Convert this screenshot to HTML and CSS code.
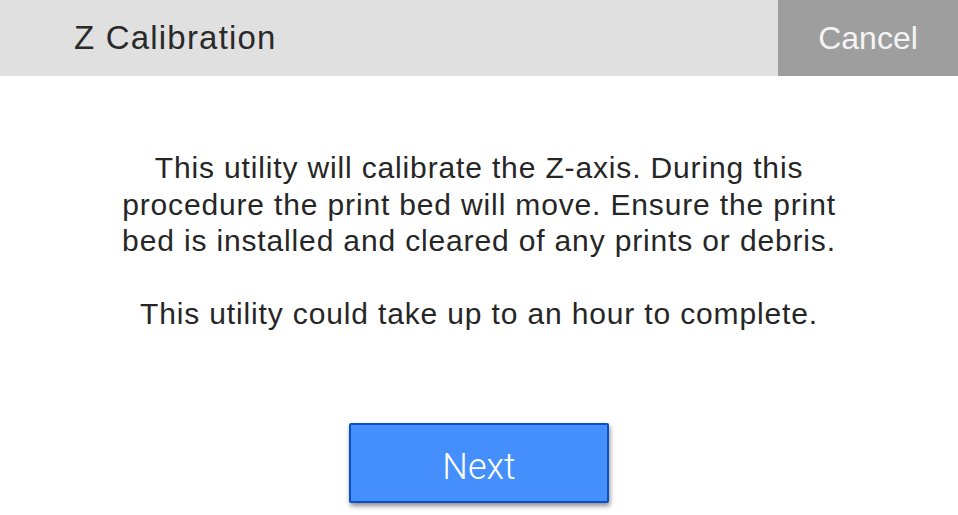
FILE: index.html
```html
<!DOCTYPE html>
<html lang="en">
<head>
    <meta charset="UTF-8">
    <meta name="viewport" content="width=device-width, initial-scale=1.0">
    <title>Z Calibration</title>
    <link rel="stylesheet" href="styles.css">
</head>
<body>
    <div class="screen">
        <div class="header">
            <div class="header__title">Z Calibration</div>
            <button class="header__cancel">Cancel</button>
        </div>
        <div class="content">
            <p class="content__text">This utility will calibrate the Z-axis. During this procedure the print bed will move. Ensure the print bed is installed and cleared of any prints or debris.</p>
            <p class="content__text">This utility could take up to an hour to complete.</p>
            <button class="content__next">Next</button>
        </div>
    </div>
</body>
</html>
```

FILE: styles.css
```css
:root {
    --header-height: 76px;
    --header-bg: #e0e0e0;
    --cancel-bg: #9e9e9e;
    --text: #262626;
    --blue: #448ffc;
    --blue-dark: #0b50c2;
}

* {
    margin: 0;
    padding: 0;
    box-sizing: border-box;
}

body {
    background: #ffffff;
    font-family: "Liberation Sans", Arial, Helvetica, sans-serif;
    color: var(--text);
}

.screen {
    width: 958px;
    height: 515px;
    display: flex;
    flex-direction: column;
}

.header {
    height: var(--header-height);
    display: flex;
    align-items: stretch;
    background: var(--header-bg);
}

.header__title {
    flex: 1;
    display: flex;
    align-items: center;
    padding-left: 74px;
    font-size: 33px;
    letter-spacing: 1.2px;
    color: #2a2a2a;
}

.header__cancel {
    width: 180px;
    border: 0;
    background: var(--cancel-bg);
    color: #f4f4f4;
    font-family: "Liberation Sans", Arial, sans-serif;
    font-size: 32px;
}

.content {
    display: flex;
    flex-direction: column;
    align-items: center;
    padding-top: 74px;
}

.content__text {
    width: 740px;
    text-align: center;
    font-size: 30px;
    letter-spacing: 0.85px;
    line-height: 36.5px;
}

.content__text + .content__text {
    margin-top: 36px;
}

.content__next {
    margin-top: 91px;
    width: 260px;
    height: 80px;
    padding-top: 8px;
    border: 2px solid var(--blue-dark);
    border-radius: 2px;
    background: var(--blue);
    color: #ffffff;
    font-family: Roboto, "Liberation Sans", sans-serif;
    font-weight: 300;
    font-size: 36px;
    box-shadow: 1px 3px 5px rgba(0, 0, 0, 0.45);
}
```
